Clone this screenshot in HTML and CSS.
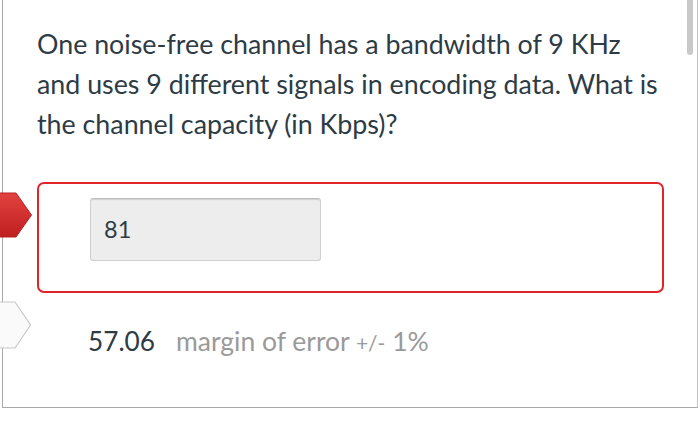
FILE: index.html
```html
<!DOCTYPE html>
<html>
<head>
<meta charset="utf-8">
<link rel="stylesheet" href="styles.css">
</head>
<body>
<div class="frame">
  <div class="scrollbar"></div>
  <p class="question">One noise-free channel has a bandwidth of 9 KHz<br>and uses 9 different signals in encoding data. What is<br>the channel capacity (in Kbps)?</p>
  <div class="row">
    <svg class="marker" width="33" height="46" viewBox="0 0 33 46">
      <defs>
        <linearGradient id="rg" x1="0" y1="0" x2="0" y2="1">
          <stop offset="0" stop-color="#e2423f"/>
          <stop offset="1" stop-color="#bf1f1f"/>
        </linearGradient>
      </defs>
      <path d="M-2 1 H16 L31.5 23 L16 45 H-2 Z" fill="url(#rg)" stroke="#b52222" stroke-width="1"/>
    </svg>
    <div class="answer-box">
      <div class="input">81</div>
    </div>
  </div>
  <div class="row correct">
    <svg class="marker grey" width="33" height="48" viewBox="0 0 33 48">
      <path d="M-2 1 H15 L30.5 24 L15 47 H-2 Z" fill="#fafafa" stroke="#c8c8c8" stroke-width="1.2"/>
    </svg>
    <div class="correct-line">
      <span class="value">57.06</span>
      <span class="margin">margin of error <span class="pm">+/-</span> 1%</span>
    </div>
  </div>
</div>
</body>
</html>
```
FILE: styles.css
```css
html, body {
  margin: 0;
  padding: 0;
  background: #fff;
}
body {
  font-family: Lato, "Open Sans", "Liberation Sans", sans-serif;
  color: #2d3b45;
}
.frame {
  position: relative;
  margin-left: 2px;
  width: 696px;
  height: 408px;
  border-left: 1px solid #a8a8a8;
  border-right: 1px solid #c4c4c4;
  border-bottom: 1px solid #a8a8a8;
  box-shadow: 0 1px 0 #d8d8d8;
  box-sizing: border-box;
  padding-left: 34px;
  padding-top: 24px;
}
.scrollbar {
  position: absolute;
  right: 4px;
  top: -4px;
  width: 6px;
  height: 59px;
  border-radius: 3px;
  background: #c9c9c9;
}
.question {
  margin: 0;
  width: 650px;
  font-size: 26.8px;
  line-height: 40px;
  white-space: nowrap;
}
.row {
  position: relative;
}
.marker {
  position: absolute;
  left: -37px;
  display: block;
}
.row .marker {
  top: 10px;
}
.row.correct .marker {
  top: 8px;
}
.answer-box {
  margin-top: 38px;
  width: 627px;
  height: 111px;
  box-sizing: border-box;
  border: 2px solid #e0242a;
  border-radius: 7px;
  padding: 14px 0 0 51px;
}
.input {
  width: 231px;
  height: 63px;
  box-sizing: border-box;
  background: #ededed;
  border: 1px solid #cfcfcf;
  border-top-color: #bdbdbd;
  box-shadow: inset 0 2px 1px -1px #d0d0d0;
  border-radius: 3px;
  font-size: 23.5px;
  line-height: 61px;
  padding-left: 13px;
  color: #2d3b45;
}
.correct-line {
  padding: 24px 0 0 51px;
  height: 48px;
  display: flex;
  align-items: center;
  white-space: nowrap;
}
.value {
  font-size: 26.2px;
  color: #2d3b45;
}
.margin {
  margin-left: 21px;
  font-size: 26.5px;
  color: #9a9a9a;
}
.pm {
  font-size: 21px;
}
```
